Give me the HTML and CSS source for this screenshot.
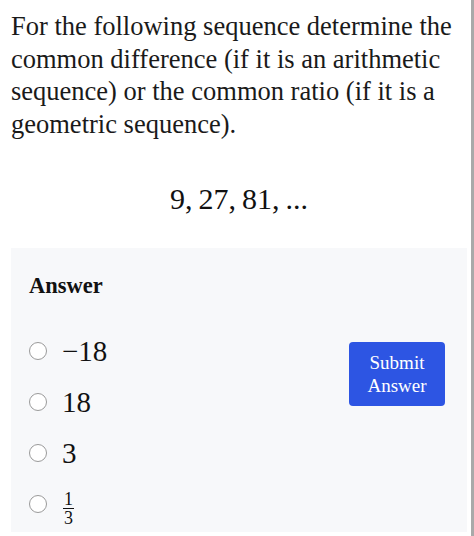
FILE: index.html
```html
<!DOCTYPE html>
<html lang="en">
<head>
    <meta charset="UTF-8">
    <meta name="viewport" content="width=device-width, initial-scale=1.0">
    <title>Sequence Question</title>
    <link rel="stylesheet" href="styles.css">
</head>
<body>
    <div class="page">
        <!-- Question -->
        <p class="question">For the following sequence determine the common difference (if it is an arithmetic sequence) or the common ratio (if it is a geometric sequence).</p>

        <div class="math-display">9,&thinsp;27,&thinsp;81,&thinsp;...</div>

        <!-- Answer Section -->
        <div class="answer-box">
            <h2>Answer</h2>
            <div class="answer-body">
                <div class="options">
                    <label class="option"><input type="radio" name="ans"><span class="math">&minus;18</span></label>
                    <label class="option"><input type="radio" name="ans"><span class="math">18</span></label>
                    <label class="option"><input type="radio" name="ans"><span class="math">3</span></label>
                    <label class="option"><input type="radio" name="ans">
                        <span class="frac"><span class="num">1</span><span class="den">3</span></span>
                    </label>
                </div>
                <button class="submit-btn">Submit<br>Answer</button>
            </div>
        </div>
    </div>
</body>
</html>
```

FILE: styles.css
```css
html, body {
    margin: 0;
    padding: 0;
    background: white;
}
body {
    font-family: "Liberation Serif", Georgia, serif;
    color: #1a1a1a;
    border-right: 3px solid #a9a9a9;
    min-height: 536px;
    box-sizing: border-box;
}
.page {
    padding: 0 4px 0 11px;
}
.question {
    margin: 0;
    padding-top: 10px;
    font-size: 26.5px;
    line-height: 32.5px;
}
.math-display {
    font-family: "Liberation Serif", serif;
    font-size: 30px;
    text-align: center;
    margin-top: 41px;
    line-height: 36px;
    color: #111;
}
.answer-box {
    background: #f7f8fa;
    margin-top: 31px;
    padding: 25px 18px 0 18px;
    box-sizing: border-box;
    height: 284px;
}
.answer-box h2 {
    margin: 0;
    font-size: 22.5px;
    font-weight: bold;
    color: #111;
}
.answer-body {
    display: flex;
    justify-content: space-between;
    align-items: flex-start;
    margin-top: 37px;
}
.options {
    display: flex;
    flex-direction: column;
    gap: 21px;
}
.option {
    display: flex;
    align-items: center;
    height: 30px;
}
.option input {
    appearance: none;
    width: 18px;
    height: 18px;
    border: 1.5px solid #9a9a9a;
    border-radius: 50%;
    margin: 0 15px 0 0;
    background: white;
}
.math {
    font-family: "Liberation Serif", serif;
    font-size: 29px;
    color: #111;
}
.frac {
    display: inline-flex;
    flex-direction: column;
    align-items: center;
    font-family: "Liberation Serif", serif;
    font-size: 18px;
    line-height: 18px;
    margin-left: 1px;
    margin-top: 8px;
    color: #111;
}
.frac .num {
    border-bottom: 1.5px solid #111;
    padding: 0 1px;
}
.submit-btn {
    background: #2d55e3;
    color: white;
    border: none;
    border-radius: 4px;
    font-family: "Liberation Serif", Georgia, serif;
    font-size: 19px;
    line-height: 23px;
    width: 96px;
    height: 64px;
    margin-right: 4px;
    margin-top: 6px;
}
```
